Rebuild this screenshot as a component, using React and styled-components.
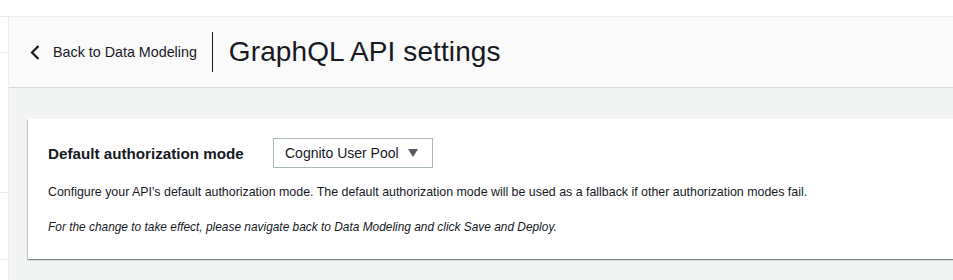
import styled, { createGlobalStyle } from 'styled-components';

const Global = createGlobalStyle`
  html, body { margin: 0; padding: 0; background: #fff; }
  body { font-family: "Liberation Sans", Arial, sans-serif; color: #16191f; overflow: hidden; }
`;

const Page = styled.div`
  width: 953px;
  height: 280px;
  overflow: hidden;
  display: flex;
  flex-direction: column;
`;

const TopStrip = styled.div`
  height: 16px;
  flex: none;
  background: #fff;
  border-bottom: 1px solid #eaeded;
`;

const Main = styled.div`
  flex: 1;
  display: flex;
  min-height: 0;
`;

const Sidebar = styled.div`
  width: 8px;
  flex: none;
  background: #fff;
  border-right: 1px solid #eaeded;
  display: flex;
  flex-direction: column;
`;

const SideItem = styled.div`
  height: ${p => p.h}px;
  flex: none;
  border-bottom: 1px solid #eaeded;
`;

const Content = styled.div`
  flex: 1;
  display: flex;
  flex-direction: column;
  min-width: 0;
  background: #f2f3f3;
`;

const Header = styled.div`
  height: 70px;
  flex: none;
  background: #fafafa;
  border-bottom: 1px solid #d5dbdb;
  display: flex;
  align-items: center;
  padding-left: 21px;
`;

const BackLink = styled.a`
  display: flex;
  align-items: center;
  gap: 13px;
  font-size: 14.3px;
  color: #16191f;
  text-decoration: none;
  padding-right: 15px;
  border-right: 1px solid #16191f;
  height: 40px;
`;

const Title = styled.h1`
  margin: 0 0 0 16px;
  font-size: 28px;
  font-weight: 400;
  color: #16191f;
  letter-spacing: 0.1px;
`;

const Body = styled.div`
  flex: 1;
  padding: 31px 0 0 19px;
`;

const Card = styled.div`
  width: 1000px;
  background: #fff;
  box-shadow: 0 1px 1px 0 rgba(0, 28, 36, 0.3), 1px 1px 1px 0 rgba(0, 28, 36, 0.15), -1px 1px 1px 0 rgba(0, 28, 36, 0.15);
  padding: 19px 20px 24px;
  box-sizing: border-box;
`;

const Row = styled.div`
  display: flex;
  align-items: center;
`;

const Label = styled.div`
  width: 225px;
  font-size: 15.2px;
  font-weight: 700;
`;

const Select = styled.div`
  height: 30px;
  box-sizing: border-box;
  width: 160px;
  border: 1px solid #aab7b8;
  display: flex;
  align-items: center;
  justify-content: space-between;
  padding: 0 14px 0 11px;
  font-size: 14px;
  color: #16191f;
`;

const Caret = styled.span`
  width: 0;
  height: 0;
  border-left: 5px solid transparent;
  border-right: 5px solid transparent;
  border-top: 8px solid #545b64;
`;

const Text = styled.p`
  margin: ${p => p.mt}px 0 0;
  font-size: ${p => (p.italic ? 11.9 : 12.4)}px;
  line-height: 16px;
  font-style: ${p => (p.italic ? 'italic' : 'normal')};
  color: #16191f;
`;

function ChevronLeft() {
  return (
    <svg width="10" height="15" viewBox="0 0 10 15" fill="none">
      <path d="M8.5 1L2 7.5l6.5 6.5" stroke="#16191f" strokeWidth="2.2" />
    </svg>
  );
}

export default function App() {
  return (
    <>
      <Global />
      <Page>
        <TopStrip />
        <Main>
          <Sidebar>
            <SideItem h={35} />
            <SideItem h={139} />
            <SideItem h={66} />
          </Sidebar>
          <Content>
            <Header>
              <BackLink href="#">
                <ChevronLeft />
                Back to Data Modeling
              </BackLink>
              <Title>GraphQL API settings</Title>
            </Header>
            <Body>
              <Card>
                <Row>
                  <Label>Default authorization mode</Label>
                  <Select>
                    Cognito User Pool
                    <Caret />
                  </Select>
                </Row>
                <Text mt={16}>
                  Configure your API's default authorization mode. The default authorization mode will be used as a fallback if other authorization modes fail.
                </Text>
                <Text mt={19} italic>
                  For the change to take effect, please navigate back to Data Modeling and click Save and Deploy.
                </Text>
              </Card>
            </Body>
          </Content>
        </Main>
      </Page>
    </>
  );
}
